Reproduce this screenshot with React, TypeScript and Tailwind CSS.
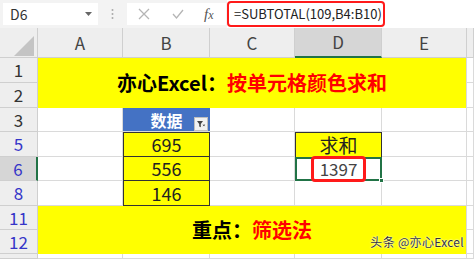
import React from "react";

const font = { fontFamily: '"Noto Sans CJK SC", "Liberation Sans", sans-serif' };

const cell = "border-r border-b border-[#dadada] bg-white";
const head = "border-r border-b border-[#cfcfcf] bg-[#eeeeee] flex items-center justify-center text-[#444] text-[17px]";
const rowHead = (n: string, blue = false, active = false) => (
  <div
    className={`border-b border-[#cfcfcf] flex items-center justify-center text-[17px] ${
      active ? "bg-[#d6d6d6] border-r-2 border-r-[#217346]" : "bg-[#eeeeee] border-r border-r-[#cfcfcf]"
    } ${blue ? "text-[#3535c8]" : "text-[#333]"}`}
  >
    {n}
  </div>
);

const FilterIcon = () => (
  <div className="w-[14px] h-[14px] bg-[#f2f2f2] border border-[#bfbfbf] flex items-center justify-center">
    <svg width="10" height="10" viewBox="0 0 10 10">
      <path d="M1 2h6L4.8 5v3.2L3.2 7.4V5z" fill="#444" />
      <path d="M7.2 5.5l1.4 1.6M8.6 5.5L7.2 7.1" stroke="#444" strokeWidth="0.9" />
    </svg>
  </div>
);

const App = () => {
  return (
    <div className="w-[474px] h-[259px] overflow-hidden bg-white" style={font}>
      {/* formula bar */}
      <div className="h-[28px] bg-[#f3f3f3] flex items-center">
        <div className="ml-[3px] w-[95px] h-[22px] bg-white flex items-center justify-between pl-[7px] pr-[6px]">
          <span className="text-[14px] text-[#333]">D6</span>
          <svg width="7" height="4" viewBox="0 0 7 4">
            <path d="M0 0h7L3.5 4z" fill="#666" />
          </svg>
        </div>
        <div className="w-[29px] flex justify-center">
          <svg width="3" height="12" viewBox="0 0 3 12">
            <circle cx="1.5" cy="2" r="1" fill="#aaa" />
            <circle cx="1.5" cy="6" r="1" fill="#aaa" />
            <circle cx="1.5" cy="10" r="1" fill="#aaa" />
          </svg>
        </div>
        <div className="w-[99px] h-[22px] bg-white flex items-center">
          <svg width="12" height="12" viewBox="0 0 12 12" className="ml-[11px]">
            <path d="M1 1l10 10M11 1L1 11" stroke="#b5b5b5" strokeWidth="1.3" />
          </svg>
          <svg width="12" height="10" viewBox="0 0 12 10" className="ml-[22px]">
            <path d="M1 5l3.5 4L11 1" stroke="#b5b5b5" strokeWidth="1.3" fill="none" />
          </svg>
          <span
            className="ml-[20px] text-[15px] italic text-[#555]"
            style={{ fontFamily: '"Liberation Serif", serif' }}
          >
            f<span className="text-[12px]">x</span>
          </span>
        </div>
        <div className="ml-[1px] flex-1 h-[28px] bg-white flex items-center">
          <div className="w-[158px] h-[26px] border-2 border-[#ff1a1a] rounded-[4px] flex items-center pl-[5px] text-[13px] text-[#222]">
            =SUBTOTAL(109,B4:B10)
          </div>
        </div>
      </div>

      {/* sheet */}
      <div className="grid grid-cols-[38px_85px_87px_85px_87px_85px_1fr] grid-rows-[30px_25px_25px_24px_25px_24px_25px_24px_24px_5px]">
        {/* header row */}
        <div className="border-r border-b border-[#cfcfcf] bg-[#eeeeee] flex items-end justify-end pr-[3px] pb-[1px]">
          <svg width="20" height="20" viewBox="0 0 20 20">
            <path d="M20 0V20H0z" fill="#c4c4c4" />
          </svg>
        </div>
        <div className={head}>A</div>
        <div className={head}>B</div>
        <div className={head}>C</div>
        <div className="border-r border-[#cfcfcf] border-b-2 border-b-[#217346] bg-[#d6d6d6] flex items-center justify-center text-[#444] text-[17px]">
          D
        </div>
        <div className={head}>E</div>
        <div className={head}></div>

        {/* rows 1-2 */}
        {rowHead("1")}
        <div className="col-span-5 row-span-2 bg-[#ffff00] border-r border-[#dadada] flex items-center justify-center text-[20px] font-bold">
          <span className="text-black">亦心Excel：</span>
          <span className="text-[#ff0000]">按单元格颜色求和</span>
        </div>
        <div className={cell}></div>
        {rowHead("2")}
        <div className={cell}></div>

        {/* row 3 */}
        {rowHead("3")}
        <div className={cell}></div>
        <div className="bg-[#4472c4] border-b border-[#dadada] flex items-center justify-center relative">
          <span className="text-white text-[16px] font-bold">数据</span>
          <div className="absolute right-[2px] top-[9px]">
            <FilterIcon />
          </div>
        </div>
        <div className={cell}></div>
        <div className={cell}></div>
        <div className={cell}></div>
        <div className={cell}></div>

        {/* row 5 */}
        {rowHead("5", true)}
        <div className={cell}></div>
        <div className="bg-[#ffff00] border border-[#333] flex items-center justify-center text-[18px] text-[#222]">695</div>
        <div className={cell}></div>
        <div className="bg-[#ffff00] border-l border-r border-t border-[#333] flex items-center justify-center text-[19px] text-[#222]">
          求和
        </div>
        <div className={cell}></div>
        <div className={cell}></div>

        {/* row 6 */}
        {rowHead("6", true, true)}
        <div className={cell}></div>
        <div className="bg-[#ffff00] border-l border-r border-b border-[#333] flex items-center justify-center text-[18px] text-[#222]">556</div>
        <div className={cell}></div>
        <div className="relative border-2 border-[#217346] bg-white flex items-center justify-center">
          <div className="w-[55px] h-[26px] border-[3px] border-[#ff1a1a] rounded-[4px] flex items-center justify-center text-[17px] text-[#444]">
            1397
          </div>
          <div className="absolute right-[-4px] bottom-[-4px] w-[5px] h-[5px] bg-[#217346] border border-white"></div>
        </div>
        <div className={cell}></div>
        <div className={cell}></div>

        {/* row 8 */}
        {rowHead("8", true)}
        <div className={cell}></div>
        <div className="bg-[#ffff00] border-l border-r border-b border-[#333] flex items-center justify-center text-[18px] text-[#222]">146</div>
        <div className={cell}></div>
        <div className={cell}></div>
        <div className={cell}></div>
        <div className={cell}></div>

        {/* rows 11-12 */}
        {rowHead("11", true)}
        <div className="col-span-5 row-span-2 bg-[#ffff00] border-r border-[#dadada] relative flex items-center justify-center text-[20px] font-bold">
          <span className="text-black">重点：</span>
          <span className="text-[#ff0000]">筛选法</span>
          <span
            className="absolute right-[2px] bottom-[3px] text-[12px] font-normal text-[#333] tracking-[0.3px]"
            style={{ textShadow: "0 0 2px #fff, 0 0 1px #fff" }}
          >
            头条 @亦心Excel
          </span>
        </div>
        <div className={cell}></div>
        {rowHead("12", true)}
        <div className={cell}></div>

        {/* row 13 partial */}
        {rowHead("")}
        <div className={cell}></div>
        <div className={cell}></div>
        <div className={cell}></div>
        <div className={cell}></div>
        <div className={cell}></div>
        <div className={cell}></div>
      </div>
    </div>
  );
};

export default App;
